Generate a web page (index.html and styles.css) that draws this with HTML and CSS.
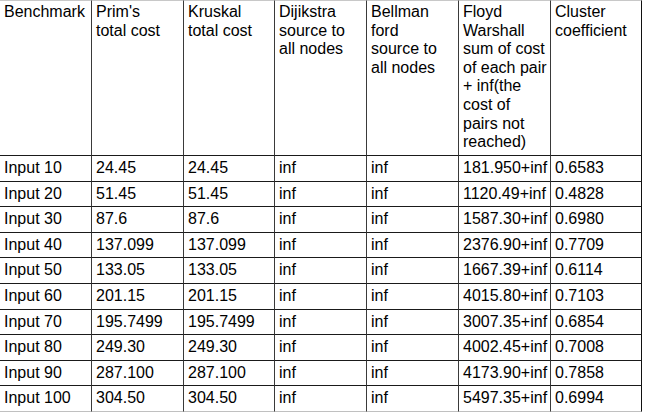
FILE: index.html
```html
<!DOCTYPE html>
<html>
<head>
<meta charset="utf-8">
<link rel="stylesheet" href="styles.css">
</head>
<body>
<div class="sheet">
  <div class="cell head">Benchmark</div>
  <div class="cell head">Prim's<br>total cost</div>
  <div class="cell head">Kruskal total cost</div>
  <div class="cell head">Dijikstra source to all nodes</div>
  <div class="cell head">Bellman ford<br>source to all nodes</div>
  <div class="cell head">Floyd Warshall sum of cost of each pair + inf(the cost of pairs not reached)</div>
  <div class="cell head last">Cluster coefficient</div>

  <div class="cell">Input 10</div><div class="cell">24.45</div><div class="cell">24.45</div><div class="cell">inf</div><div class="cell">inf</div><div class="cell">181.950+inf</div><div class="cell last">0.6583</div>
  <div class="cell">Input 20</div><div class="cell">51.45</div><div class="cell">51.45</div><div class="cell">inf</div><div class="cell">inf</div><div class="cell">1120.49+inf</div><div class="cell last">0.4828</div>
  <div class="cell">Input 30</div><div class="cell">87.6</div><div class="cell">87.6</div><div class="cell">inf</div><div class="cell">inf</div><div class="cell">1587.30+inf</div><div class="cell last">0.6980</div>
  <div class="cell">Input 40</div><div class="cell">137.099</div><div class="cell">137.099</div><div class="cell">inf</div><div class="cell">inf</div><div class="cell">2376.90+inf</div><div class="cell last">0.7709</div>
  <div class="cell">Input 50</div><div class="cell">133.05</div><div class="cell">133.05</div><div class="cell">inf</div><div class="cell">inf</div><div class="cell">1667.39+inf</div><div class="cell last">0.6114</div>
  <div class="cell">Input 60</div><div class="cell">201.15</div><div class="cell">201.15</div><div class="cell">inf</div><div class="cell">inf</div><div class="cell">4015.80+inf</div><div class="cell last">0.7103</div>
  <div class="cell">Input 70</div><div class="cell">195.7499</div><div class="cell">195.7499</div><div class="cell">inf</div><div class="cell">inf</div><div class="cell">3007.35+inf</div><div class="cell last">0.6854</div>
  <div class="cell">Input 80</div><div class="cell">249.30</div><div class="cell">249.30</div><div class="cell">inf</div><div class="cell">inf</div><div class="cell">4002.45+inf</div><div class="cell last">0.7008</div>
  <div class="cell">Input 90</div><div class="cell">287.100</div><div class="cell">287.100</div><div class="cell">inf</div><div class="cell">inf</div><div class="cell">4173.90+inf</div><div class="cell last">0.7858</div>
  <div class="cell bottom">Input 100</div><div class="cell bottom">304.50</div><div class="cell bottom">304.50</div><div class="cell bottom">inf</div><div class="cell bottom">inf</div><div class="cell bottom">5497.35+inf</div><div class="cell bottom last">0.6994</div>
</div>
</body>
</html>
```
FILE: styles.css
```css
html, body {
  margin: 0;
  padding: 0;
  background: #ffffff;
}

.sheet {
  display: grid;
  grid-template-columns: 92px 92px 91px 92px 92px 92px 91px;
  grid-template-rows: 156px repeat(10, 25.6px);
  width: 642px;
  font-family: "Liberation Sans", Arial, sans-serif;
  font-size: 16px;
  line-height: 18.4px;
  color: #000;
}

.cell {
  box-sizing: border-box;
  padding: 3px 2px 0 4px;
  border-right: 1px solid #3a3a3a;
  border-bottom: 1px solid #1a1a1a;
  white-space: nowrap;
  overflow: hidden;
}

.cell.head {
  white-space: normal;
  line-height: 18.6px;
  padding-top: 2px;
  border-top: 1px solid #c8c8c8;
}

.cell.last {
  border-right-color: #111;
}

.cell.bottom {
  border-bottom-color: #c0c0c0;
}
```
